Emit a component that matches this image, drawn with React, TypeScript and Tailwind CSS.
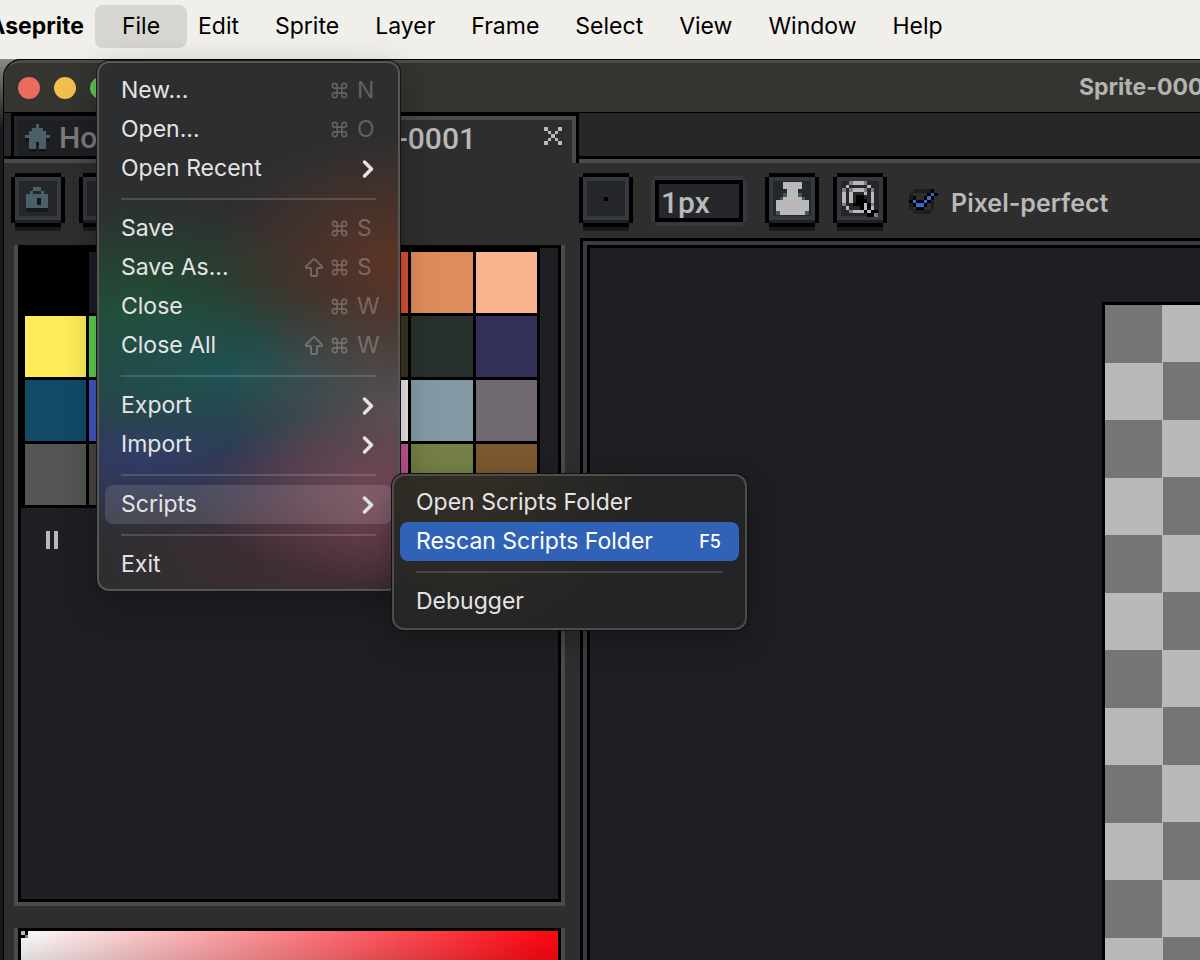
import { ReactNode } from "react";
import { ArrowBigUp, ChevronRight, Command } from "lucide-react";
import clsx from "clsx";

const MENUS = ["Edit", "Sprite", "Layer", "Frame", "Select", "View", "Window", "Help"];

type MenuEntry = {
  label: string;
  shortcut?: string;
  shift?: boolean;
  submenu?: boolean;
};

const FILE_MENU: MenuEntry[][] = [
  [
    { label: "New...", shortcut: "N" },
    { label: "Open...", shortcut: "O" },
    { label: "Open Recent", submenu: true },
  ],
  [
    { label: "Save", shortcut: "S" },
    { label: "Save As...", shortcut: "S", shift: true },
    { label: "Close", shortcut: "W" },
    { label: "Close All", shortcut: "W", shift: true },
  ],
  [
    { label: "Export", submenu: true },
    { label: "Import", submenu: true },
  ],
  [{ label: "Scripts", submenu: true }],
  [{ label: "Exit" }],
];

const PALETTE = [
  "#000000", "#1f1c29", "#44283c", "#663931", "#8f563b", "#dc5430", "#df8c5c", "#f8b48d",
  "#feed58", "#5fd353", "#6abe30", "#37946e", "#4b692f", "#3b3520", "#26302c", "#323058",
  "#114b68", "#4657c8", "#639bff", "#5fcde4", "#cbdbfc", "#ececec", "#839aa5", "#706a70",
  "#545654", "#4b4541", "#ac3232", "#d95763", "#d77bba", "#c95795", "#748045", "#7b582f",
];

// one letter per pixel, "." is empty
const PIXEL_COLORS: Record<string, string> = {
  a: "#49606b",
  t: "#3e5861",
  L: "#b9b9b9",
  g: "#7f7f82",
  k: "#000000",
  d: "#1d1e20",
  s: "#15161a",
  B: "#3a6ad0",
};

const HOME = ["...a...", "..aaa..", ".aaaaa.", "aaaaaaa", "saaaaas", ".aasaa.", ".aa.aa.", ".ss.ss."];
const LOCK = ["..aa..", ".a..a.", "aaaaaa", "aaasaa", "aaasaa", "aaaaaa", "ssssss"];
const CLOSE = ["L...L", ".L.L.", "..L..", ".L.L.", "L...L"];
const DOT = ["k"];
const FLASK = [
  "..LLLLL..",
  "..LLLLL..",
  "...LLL...",
  "..tLLLt..",
  ".tLLLLLt.",
  "LLLLLLLLL",
  "LLLLLLLLL",
  "LLLLLLLLL",
  "tLLLLLLLt",
];
const DYNAMICS = [
  "..gLLLg...",
  ".L.....L..",
  "g.gLLLg.g.",
  "L.L...L.L.",
  "L.L.kk..L.",
  "L.L.kkk.L.",
  "g..kkkLkg.",
  ".L...kLkL.",
  "..gLLLkLkk",
  ".......kkg",
];
const CHECK = [
  ".dddddk.",
  "d....kBk",
  "dk..kBk.",
  "kBkkBkd.",
  "dkBBk.d.",
  "d.kk..d.",
  ".ddddd..",
];

function PixelIcon({ rows, className }: { rows: string[]; className: string }) {
  return (
    <svg
      viewBox={`0 0 ${rows[0].length} ${rows.length}`}
      shapeRendering="crispEdges"
      className={className}
      aria-hidden="true"
    >
      {rows.flatMap((row, y) =>
        [...row].map((c, x) =>
          c === "." ? null : (
            <rect key={`${x}-${y}`} x={x} y={y} width="1" height="1" fill={PIXEL_COLORS[c]} />
          )
        )
      )}
    </svg>
  );
}

function PixelButton({ label, children }: { label: string; children?: ReactNode }) {
  return (
    <button
      aria-label={label}
      className="w-[46px] h-[46px] shrink-0 bg-[#1f2024] pb-[3px] shadow-[0_-4px_0_#000,4px_0_0_#000,-4px_0_0_#000,0_4px_0_#000,0_8px_0_#1a1a1a]"
    >
      <span className="flex h-full items-center justify-center border-4 border-[#36383f] bg-[#26272b]">
        {children}
      </span>
    </button>
  );
}

function MenuSeparator() {
  return (
    <div className="flex h-[21px] items-center px-4" role="separator">
      <div className="h-[2px] w-full bg-white/15" />
    </div>
  );
}

function MenuItem({ item, active }: { item: MenuEntry; active?: boolean }) {
  return (
    <button
      role="menuitem"
      className={clsx(
        "flex h-[39px] w-full items-center rounded-lg px-4 text-left",
        active && "bg-white/12"
      )}
    >
      <span className="flex-1">{item.label}</span>
      {item.shift && <ArrowBigUp className="mr-1 h-6 w-6 text-white/25" strokeWidth={2} />}
      {item.shortcut && (
        <span className="flex items-center gap-2 text-white/25">
          <Command className="h-[19px] w-[19px]" strokeWidth={2} />
          <span className="w-[19px] whitespace-nowrap">{item.shortcut}</span>
        </span>
      )}
      {item.submenu && <ChevronRight className="-mr-[6px] h-7 w-7" strokeWidth={3} />}
    </button>
  );
}

function ScriptsMenu() {
  return (
    <div
      role="menu"
      className="absolute -top-[11px] left-[287px] z-10 w-[355px] rounded-xl border-2 border-[#4d4d4c] bg-[#232425] bg-[radial-gradient(circle_at_20%_0%,#332e25,transparent_55%)] px-[6px] py-[7px] shadow-[0_0_0_1px_#111,0_10px_30px_rgba(0,0,0,0.3)]"
    >
      <MenuItem item={{ label: "Open Scripts Folder" }} />
      <button
        role="menuitem"
        className="flex h-[39px] w-full items-center justify-between rounded-lg bg-[#3063b8] px-4 text-white"
      >
        <span>Rescan Scripts Folder</span>
        <span className="mr-[2px] text-[18px] font-medium">F5</span>
      </button>
      <MenuSeparator />
      <MenuItem item={{ label: "Debugger" }} />
    </div>
  );
}

function FileMenu() {
  return (
    <div
      role="menu"
      className="absolute left-[97px] top-[61px] w-[303px] rounded-xl border-2 border-[#565655] bg-[#2d2e30] bg-[radial-gradient(ellipse_190px_130px_at_100%_38%,#5c3526,transparent),radial-gradient(ellipse_200px_90px_at_100%_82%,#754858,transparent),radial-gradient(ellipse_170px_130px_at_100%_66%,#5b4f52,transparent),radial-gradient(ellipse_280px_90px_at_45%_59%,#1f5355,transparent),radial-gradient(ellipse_220px_120px_at_10%_48%,#215034,transparent),radial-gradient(ellipse_260px_90px_at_15%_74%,#323d68,transparent),radial-gradient(ellipse_300px_120px_at_100%_92%,#4b2c38,transparent)] px-[6px] pb-[5px] pt-2 text-[#e4e4e4] shadow-[0_0_0_1px_#151515,0_12px_36px_rgba(0,0,0,0.3)]"
    >
      {FILE_MENU.map((group, i) => (
        <div key={i}>
          {i > 0 && <MenuSeparator />}
          {group.map((item) => (
            <div key={item.label} className="relative">
              <MenuItem item={item} active={item.label === "Scripts"} />
              {item.label === "Scripts" && <ScriptsMenu />}
            </div>
          ))}
        </div>
      ))}
    </div>
  );
}

function MenuBar() {
  return (
    <nav className="flex h-[59px] shrink-0 items-start bg-[#f0efe9] pt-[5px] text-black">
      <div className="flex h-[43px] w-[84px] items-center justify-end whitespace-nowrap font-bold">
        Aseprite
      </div>
      <button className="ml-[11px] h-[43px] w-[92px] rounded-lg bg-[#d6d5cf]">File</button>
      <div className="ml-[11px] flex h-[43px] items-center gap-9">
        {MENUS.map((name) => (
          <button key={name}>{name}</button>
        ))}
      </div>
    </nav>
  );
}

function Tabs() {
  return (
    <div className="flex h-[50px] shrink-0 bg-[#27272a] font-['Roboto',sans-serif] text-[30px] font-medium text-[#b9b9b9]">
      <div className="flex w-[226px] border-b-4 border-[#4b4b4b] pl-[7px] shadow-[inset_0_-3px_0_#000]">
        <button className="mb-[3px] flex flex-1 items-center gap-[9px] border-l-[3px] border-t-[3px] border-black bg-[#1f2024] pl-[11px] pt-[3px] text-[#7b7b7b] shadow-[inset_4px_4px_0_#25262c]">
          <PixelIcon rows={HOME} className="h-[28px] w-[25px]" />
          Home
        </button>
      </div>
      <div className="flex w-[349px] items-center justify-end border-r-[3px] border-t-[3px] border-black bg-[#2e2e2e] pb-[3px] shadow-[inset_-4px_4px_0_#4b4b4b]">
        <button>Sprite-0001</button>
        <button aria-label="Close tab" className="mb-1 ml-[68px] mr-[14px]">
          <PixelIcon rows={CLOSE} className="h-[18px] w-[18px]" />
        </button>
      </div>
      <div className="flex-1 border-b-4 border-[#4b4b4b] shadow-[inset_0_-3px_0_#000]" />
    </div>
  );
}

function Toolbar() {
  return (
    <div className="flex h-[75px] shrink-0 items-start bg-[#2e2e2e] pt-[14px]">
      <div className="flex w-[576px] gap-[22px] pl-[11px]">
        <PixelButton label="Edit palette">
          <PixelIcon rows={LOCK} className="mt-[2px] mr-[2px] h-[25px] w-[22px]" />
        </PixelButton>
        <PixelButton label="Sort palette" />
        <PixelButton label="Presets" />
      </div>
      <div className="flex items-start pl-[3px]">
        <PixelButton label="Brush type">
          <PixelIcon rows={DOT} className="h-1 w-1" />
        </PixelButton>
        <input
          aria-label="Brush size"
          defaultValue="1px"
          className="ml-[26px] mt-[3px] h-[42px] w-[88px] border-4 border-black bg-[#26272b] pl-[2px] pt-[3px] font-['Roboto',sans-serif] text-[30px] font-medium text-[#b9b9b9] outline-none shadow-[0_-4px_0_#36383f,4px_0_0_#36383f,-4px_0_0_#36383f,0_4px_0_#36383f]"
        />
        <div className="ml-[26px] flex gap-[22px]">
          <PixelButton label="Ink">
            <PixelIcon rows={FLASK} className="h-[33px] w-[33px]" />
          </PixelButton>
          <PixelButton label="Dynamics">
            <PixelIcon rows={DYNAMICS} className="h-[36px] w-[36px]" />
          </PixelButton>
        </div>
        <label className="ml-[26px] mt-[8px] flex items-center gap-[13px] font-['Inter',sans-serif] text-[25px] leading-9 font-semibold text-[#b9b9b9]">
          <span className="grid h-9 place-items-center">
            <input
              type="checkbox"
              defaultChecked
              className="col-start-1 row-start-1 h-[25px] w-[29px] appearance-none"
            />
            <PixelIcon
              rows={CHECK}
              className="pointer-events-none col-start-1 row-start-1 mb-[4px] h-[25px] w-[29px]"
            />
          </span>
          Pixel-perfect
        </label>
      </div>
    </div>
  );
}

function ColorPanel() {
  return (
    <aside className="flex w-[576px] shrink-0 flex-col bg-[#2e2e2e] pl-[10px] pr-[15px] pt-[7px]">
      <div className="h-[661px] shrink-0 border-4 border-t-0 border-[#4b4b4b]">
        <div className="h-full border-[3px] border-black bg-[#1e1f23]">
          <div className="w-[519px] bg-black pb-[3px] pl-1 pr-[3px] pt-1">
            <div className="grid grid-cols-8 gap-[3px]">
              {PALETTE.map((color) => (
                <button
                  key={color}
                  aria-label={color}
                  className="h-[61px]"
                  style={{ backgroundColor: color }}
                />
              ))}
            </div>
          </div>
          <button aria-label="Resize palette" className="ml-[25px] mt-[23px] flex gap-1">
            <span className="h-[18px] w-1 bg-[#b9b9b9]" />
            <span className="h-[18px] w-1 bg-[#b9b9b9]" />
          </button>
        </div>
      </div>
      <div className="mt-[22px] flex min-h-0 flex-1 border-x-4 border-[#4b4b4b]">
        <div className="flex-1 border-x-[3px] border-t-[3px] border-black bg-linear-to-r/srgb from-[#fbfbfb] to-[#ff0a14] to-97%">
          <div className="h-full bg-linear-to-b from-transparent to-black/12">
            <PixelIcon rows={["Lk", "kg"]} className="h-[7px] w-[7px]" />
          </div>
        </div>
      </div>
    </aside>
  );
}

function Editor() {
  return (
    <main className="flex min-w-0 flex-1 border-l-[3px] border-t-[3px] border-black bg-[#1e1f23]">
      <div className="flex flex-1 border-l-4 border-t-4 border-[#3a3c43]">
        <div className="flex flex-1 justify-end border-l-[3px] border-t-[3px] border-black pt-[54px]">
          <div className="w-[98px] border-l-[3px] border-t-[3px] border-black bg-[repeating-conic-gradient(#b9b9b9_0%_25%,#757575_0%_50%)] bg-[size:115px_115px]" />
        </div>
      </div>
    </main>
  );
}

export default function App() {
  return (
    <div className="relative flex h-screen flex-col overflow-hidden bg-[#17191d] font-['Inter','Liberation_Sans',sans-serif] text-[23px]">
      <MenuBar />
      <div className="flex min-h-0 flex-1 bg-linear-to-b from-[#8b8a86] to-[#17191d] to-8% pl-1">
        <div className="flex min-w-0 flex-1 flex-col overflow-hidden rounded-tl-[18px] border-t border-black bg-[#2e2e2e] shadow-[-1px_0_0_#000]">
          <header className="flex h-[53px] shrink-0 items-center overflow-hidden rounded-tl-[16px] border-b border-t-[3px] border-b-black border-t-[#4c4c4a] bg-[#343431]">
            <div className="flex gap-[14px] pl-[14px]">
              <button aria-label="Close" className="h-[22px] w-[22px] rounded-full bg-[#ed6a5e]" />
              <button aria-label="Minimize" className="h-[22px] w-[22px] rounded-full bg-[#f5bf4f]" />
              <button aria-label="Zoom" className="h-[22px] w-[22px] rounded-full bg-[#61c554]" />
            </div>
            <h1 className="ml-[967px] whitespace-nowrap font-bold text-[#b3b3b0]">Sprite-0001</h1>
          </header>
          <Tabs />
          <Toolbar />
          <div className="flex min-h-0 flex-1">
            <ColorPanel />
            <Editor />
          </div>
        </div>
      </div>
      <FileMenu />
    </div>
  );
}
